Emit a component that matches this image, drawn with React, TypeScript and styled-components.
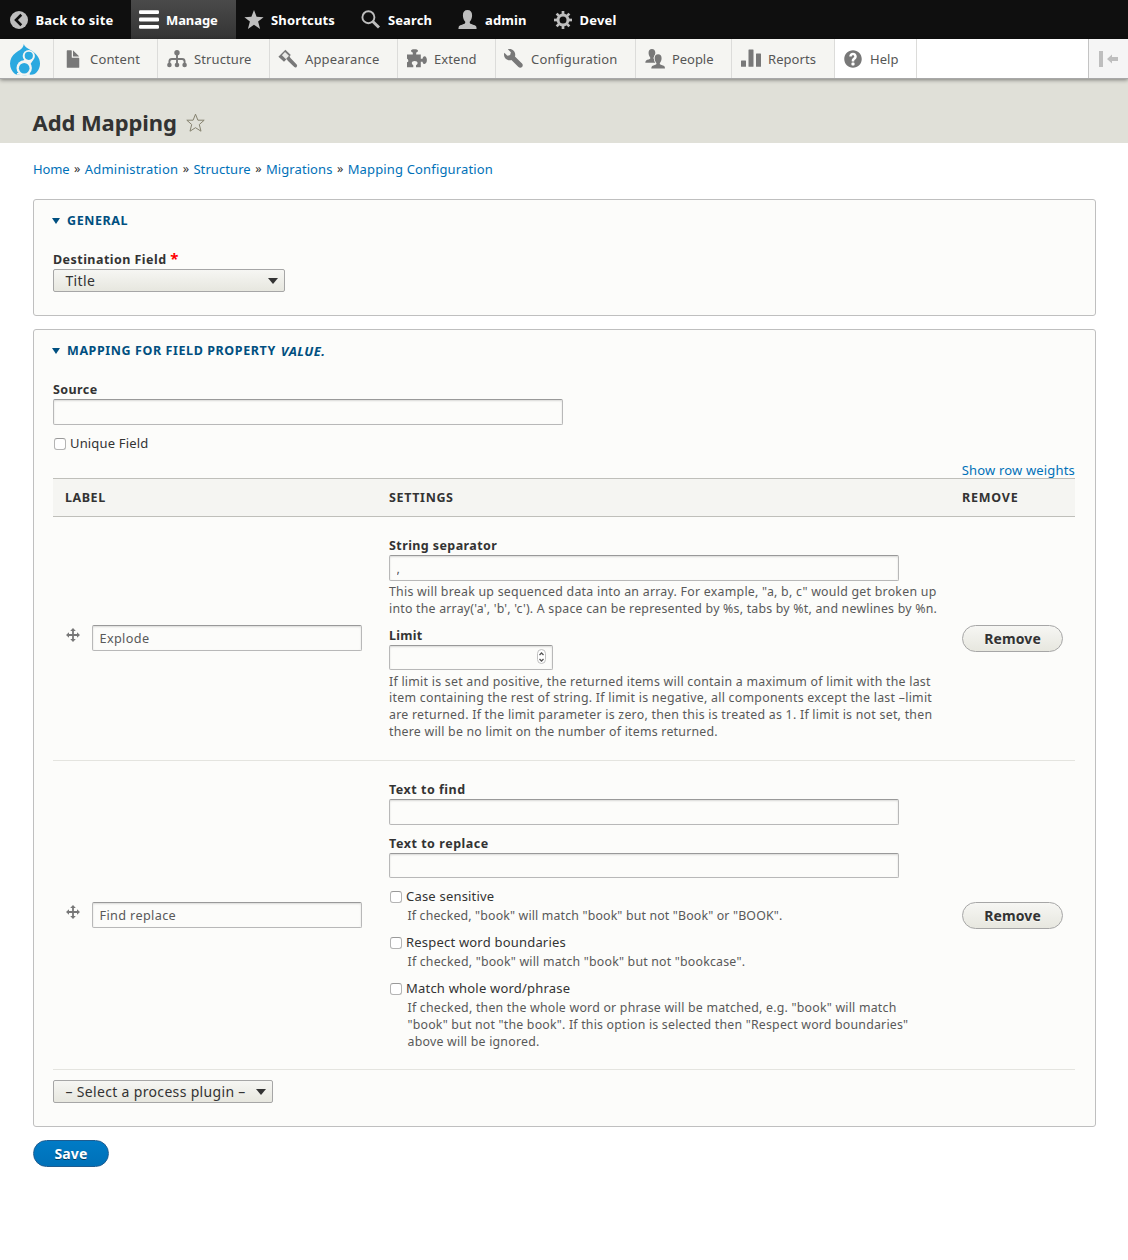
import React from "react";
import styled, { createGlobalStyle } from "styled-components";

const GlobalStyle = createGlobalStyle`
  *, *::before, *::after { box-sizing: border-box; }
  body {
    margin: 0;
    background: #fff;
    color: #333;
    font-family: "Noto Sans", "Open Sans", sans-serif;
    font-size: 13px;
  }
  input, button { font-family: inherit; }
`;

/* ---------- toolbar ---------- */

const ToolbarBar = styled.nav`
  display: flex;
  height: 39px;
  background: #0f0f0f;
`;

const BarTab = styled.a<{ $w: number; $icon: number; $text: number; $ls: number; $active?: boolean }>`
  display: flex;
  align-items: center;
  width: ${(p) => p.$w}px;
  height: 39px;
  padding: 1px 0 0 ${(p) => p.$icon}px;
  background: ${(p) => (p.$active ? "linear-gradient(#4a4a4a, #343434)" : "none")};
  color: #fff;
  font-weight: 700;
  letter-spacing: ${(p) => p.$ls}px;
  white-space: nowrap;
  svg {
    flex: none;
    width: 20px;
    height: 20px;
    margin-right: ${(p) => p.$text - p.$icon - 20}px;
    color: #bebebe;
  }
`;

const Tray = styled.nav`
  position: relative;
  display: flex;
  height: 40px;
  background: #fff;
  border-bottom: 1px solid #a8a8a8;
  box-shadow: 0 1px 4px rgba(0, 0, 0, 0.45);
`;

const TrayTab = styled.a<{ $w: number; $ls?: number; $plain?: boolean; $pad?: number }>`
  display: flex;
  align-items: center;
  width: ${(p) => p.$w}px;
  padding: 1px 0 0 ${(p) => p.$pad ?? 9}px;
  background: ${(p) => (p.$plain ? "#fff" : "#f5f5f2")};
  border-right: 1px solid #dcdcda;
  color: #565656;
  letter-spacing: ${(p) => p.$ls ?? 0}px;
  white-space: nowrap;
  svg {
    flex: none;
    width: 20px;
    height: 20px;
    margin-right: 7px;
    color: #787878;
  }
`;

const LogoTab = styled.a`
  width: 54px;
  padding: 5px 0 0 10px;
  background: #f5f5f2;
  border-right: 1px solid #dcdcda;
`;

const TrayToggle = styled.button`
  display: flex;
  align-items: center;
  width: 40px;
  margin-left: auto;
  padding: 0 0 0 9px;
  border: 0;
  border-left: 1px solid #c4c4c4;
  background: #f5f5f5;
  color: #bebebe;
`;

/* ---------- page header ---------- */

const PageHeader = styled.header`
  display: flex;
  gap: 9px;
  height: 64px;
  padding: 28px 0 0 32.5px;
  background: #e0e0d8;
`;

const PageTitle = styled.h1`
  margin: 0;
  font-size: 22px;
  line-height: 31px;
  font-weight: 700;
  letter-spacing: -0.08px;
`;

const TitleStar = styled.svg`
  margin-top: 5.5px;
`;

const Content = styled.main`
  padding: 0 32px 0 33px;
`;

const Breadcrumb = styled.nav`
  display: flex;
  height: 56px;
  padding-top: 16px;
  line-height: 20px;
  white-space: pre;
`;

const Link = styled.a<{ $ls?: number }>`
  color: #0071b8;
  letter-spacing: ${(p) => p.$ls ?? 0}px;
`;

const Separator = styled.span`
  width: 15.2px;
  text-align: center;
  font-size: 12.5px;
`;

/* ---------- form parts ---------- */

const Panel = styled.section<{ $h: number }>`
  height: ${(p) => p.$h}px;
  margin-bottom: 13px;
  padding: 11px 20px 0 19px;
  background: #fcfcfa;
  border: 1px solid #bfbfbf;
  border-radius: 3px;
`;

const Summary = styled.h2`
  display: flex;
  align-items: center;
  margin: 0 0 18px -1px;
  color: #004f80;
  font-size: 12.5px;
  line-height: 20px;
  font-weight: 700;
  letter-spacing: 0.59px;
  white-space: pre;
  svg { margin-right: 7px; }
  em { font-style: italic; font-size: 13px; letter-spacing: 0.45px; margin-left: 1px; }
`;

const Label = styled.label<{ $ls?: number }>`
  display: block;
  padding-top: 1px;
  font-size: 12.5px;
  line-height: 20px;
  height: 20px;
  font-weight: 700;
  letter-spacing: ${(p) => p.$ls ?? 0.41}px;
  white-space: pre;
`;

const Required = styled.span`
  color: #f00;
  font-size: 15px;
  line-height: 1px;
`;

const Select = styled.div<{ $w: number }>`
  display: flex;
  align-items: center;
  justify-content: space-between;
  width: ${(p) => p.$w}px;
  height: 23px;
  padding: 0 6px 0 11.5px;
  border: 1px solid #a6a6a6;
  border-radius: 2px;
  background: linear-gradient(#f6f6f3, #e7e7df);
  font-size: 14px;
  letter-spacing: 0.33px;
  white-space: nowrap;
`;

const TextInput = styled.input<{ $w: number; $h?: number }>`
  display: block;
  width: ${(p) => p.$w}px;
  height: ${(p) => p.$h ?? 26}px;
  padding: 0 6px 1px 6.5px;
  border: 1px solid #b8b8b8;
  border-top-color: #999;
  border-radius: 2px;
  outline: none;
  background: #fcfcfa;
  box-shadow: inset 0 1px 2px rgba(0, 0, 0, 0.14);
  color: #595959;
  font-size: 12.7px;
  letter-spacing: 0.35px;
`;

const NumberField = styled.div`
  display: flex;
  align-items: center;
  justify-content: flex-end;
  width: 164px;
  height: 25px;
  padding: 0 6px 1px 0;
  border: 1px solid #b8b8b8;
  border-top-color: #999;
  border-radius: 2px;
  background: #fcfcfa;
  box-shadow: inset 0 1px 2px rgba(0, 0, 0, 0.14);
`;

const Stepper = styled.span`
  display: flex;
  align-items: center;
  justify-content: center;
  width: 9px;
  height: 15px;
  border: 1px solid #c0c0c0;
  border-radius: 5px;
  background: #fff;
`;

const CheckRow = styled.label<{ $ls?: number }>`
  display: flex;
  align-items: center;
  height: 20px;
  padding-left: 1px;
  letter-spacing: ${(p) => p.$ls ?? 0.2}px;
`;

const CheckBox = styled.input.attrs({ type: "checkbox" })`
  appearance: none;
  width: 12px;
  height: 12px;
  margin: 2px 4px 0 0;
  border: 1px solid #b4b4b4;
  border-top-color: #999;
  border-radius: 3px;
  background: #fff;
`;

const Description = styled.p<{ $indent?: number; $top?: number }>`
  margin: 0;
  padding: ${(p) => p.$top ?? 2}px 0 0 ${(p) => p.$indent ?? 0}px;
  color: #595959;
  font-size: 12.35px;
  line-height: 16.8px;
`;

const Line = styled.span<{ $ls?: number }>`
  display: block;
  letter-spacing: ${(p) => p.$ls ?? 0.255}px;
  white-space: nowrap;
`;

/* ---------- plugin table ---------- */

const WeightToggle = styled.div`
  display: flex;
  justify-content: flex-end;
  height: 18px;
  line-height: 20px;
`;

const TableRow = styled.div<{ $h: number }>`
  display: grid;
  grid-template-columns: 324px 573px 1fr;
  align-items: center;
  height: ${(p) => p.$h}px;
  padding-left: 12px;
  border-bottom: 1px solid #e4e4df;
`;

const TableHead = styled(TableRow)`
  background: #f5f5f2;
  border-top: 1px solid #bfbfba;
  border-bottom-color: #bfbfba;
  font-size: 12.5px;
  font-weight: 700;
`;

const HeadCell = styled.span<{ $ls: number }>`
  letter-spacing: ${(p) => p.$ls}px;
`;

const LabelCell = styled.div<{ $lift?: number }>`
  display: flex;
  align-items: center;
  gap: 12px;
  padding: 0 0 ${(p) => p.$lift ?? 0}px 1px;
`;

const DragHandle = styled.svg`
  flex: none;
  margin-bottom: 6px;
`;

const SettingsCell = styled.div<{ $top: number }>`
  align-self: start;
  padding-top: ${(p) => p.$top}px;
`;

const Field = styled.div<{ $gap?: number }>`
  margin-bottom: ${(p) => p.$gap ?? 0}px;
`;

const Button = styled.button<{ $primary?: boolean }>`
  display: block;
  width: ${(p) => (p.$primary ? 76 : 101)}px;
  height: 27px;
  padding: 1px 0 0;
  border: 1px solid ${(p) => (p.$primary ? "#1e5c90" : "#a6a6a6")};
  border-radius: 14px;
  background: ${(p) => (p.$primary ? "linear-gradient(#007bc6, #0071b8)" : "linear-gradient(#f6f6f3, #e7e7df)")};
  color: ${(p) => (p.$primary ? "#fff" : "#333")};
  font-size: 14px;
  line-height: 24px;
  font-weight: 700;
  letter-spacing: 0.12px;
  text-shadow: ${(p) => (p.$primary ? "0 1px rgba(0, 0, 0, 0.5)" : "0 1px rgba(255, 255, 255, 0.6)")};
`;

const PluginPicker = styled.div`
  padding-top: 10px;
`;

/* ---------- icons ---------- */

const BackIcon = () => (
  <svg viewBox="0 0 20 20">
    <circle cx="10" cy="10" r="9" fill="currentColor" />
    <path d="M12.3 4.8 7 10l5.3 5.2" fill="none" stroke="#0f0f0f" strokeWidth="2.6" />
  </svg>
);
const MenuIcon = () => (
  <svg viewBox="0 0 20 20" fill="#fff">
    <rect x="0" y="0.2" width="20" height="3.8" rx="1.2" />
    <rect x="0" y="7.6" width="20" height="3.8" rx="1.2" />
    <rect x="0" y="15" width="20" height="3.8" rx="1.2" />
  </svg>
);
const StarIcon = () => (
  <svg viewBox="0 0 20 20" fill="currentColor">
    <path d="M10 0l2.6 6.8 7 .4-5.5 4.400 2 7.400-6.100-4.200L3.900 19l2-7.400L.4 7.200l7-.4z" />
  </svg>
);
const SearchIcon = () => (
  <svg viewBox="0 0 20 20" fill="none" stroke="currentColor">
    <circle cx="7.4" cy="7.2" r="6" strokeWidth="1.9" />
    <path d="M11.8 11.5l6.2 6" strokeWidth="3" />
  </svg>
);
const bust =
  "M9.5 0c3 0 4.6 2 4.6 5.2 0 2.600-.8 4.700-2 6.100-.6.7-.5 2 .4 2.500 1.700.9 5.500 1.200 5.900 3.200l.2 2H.4l.3-2c.5-2 4.200-2.300 5.800-3.200.9-.5 1-1.800.4-2.500-1.200-1.400-2-3.500-2-6.100C4.900 2 6.500 0 9.500 0z";
const UserIcon = () => (
  <svg viewBox="0 0 20 20" fill="currentColor"><path d={bust} /></svg>
);
const GearIcon = () => (
  <svg viewBox="0 0 20 20" fill="none" stroke="currentColor">
    <circle cx="10" cy="10" r="5" strokeWidth="3" />
    {[0, 45, 90, 135, 180, 225, 270, 315].map((a) => (
      <path key={a} d="M10 4.500V1" strokeWidth="2.7" transform={`rotate(${a} 10 10)`} />
    ))}
  </svg>
);
const FileIcon = () => (
  <svg viewBox="0 0 16 16" fill="currentColor">
    <path d="M12.502 7h-5c-.276 0-.502-.225-.502-.5v-5c0-.275-.225-.5-.5-.5h-3c-.275 0-.5.225-.5.5v13.029c0 .275.225.5.5.5h9.002c.275 0 .5-.225.5-.5v-7.029c0-.275-.225-.5-.5-.5zM8.502 6h4c.275 0 .34-.159.146-.354l-4.293-4.292c-.195-.195-.353-.129-.353.146v4c0 .275.225.5.5.5z" />
  </svg>
);
const StructureIcon = () => (
  <svg viewBox="0 0 20 20" fill="currentColor">
    <circle cx="10" cy="3.700" r="2.700" />
    <circle cx="2.400" cy="16" r="2.300" />
    <circle cx="10" cy="16" r="2.300" />
    <circle cx="17.600" cy="16" r="2.300" />
    <path d="M10 4v12M2.400 16v-3.500q0-2.500 2.500-2.500h10.200q2.500 0 2.500 2.500V16" fill="none" stroke="currentColor" strokeWidth="1.900" />
  </svg>
);
const BrushIcon = () => (
  <svg viewBox="0 0 20 20">
    <path d="M.4 7.800 7.400.7 12.800 6 6 12.800z" fill="currentColor" />
    <path d="M3.900 6.300 7 3l4.200 4L8 10.300z" fill="#e9e9e6" />
    <path d="M8.500 9.500l2.700-2.700 1.300 2.200 6.200 6.600q1 1.200-.1 2.300t-2.300.1l-6.500-6.300z" fill="currentColor" />
  </svg>
);
const PuzzleIcon = () => (
  <svg viewBox="0 0 20 20" fill="currentColor">
    <path d="M0 5.500h5.800V3.600C4.600 3.200 4 2.700 4 1.800 4 .7 5 .2 7.500.2s3.500.5 3.500 1.600c0 .9-.6 1.400-1.800 1.800v1.900h4.600v4.300h1.700c.3-1.700 1-2.600 2-2.600 1.500 0 2.400 1.800 2.400 3.900s-.9 3.900-2.400 3.900c-1 0-1.700-.9-2-2.300h-1.700v5.500H9v-1.900c1-.6 1.600-1.400 1.600-2.200 0-1.200-1.200-2-2.900-2s-2.900.8-2.900 2c0 .8.6 1.600 1.500 2.200v1.900H0v-5c1-.2 1.300-.6 1.300-1.300S1 9.900 0 9.700z" />
  </svg>
);
const WrenchIcon = () => (
  <svg viewBox="0 0 16 16" fill="currentColor">
    <path d="M14.416 11.586l-5.667-5.665c.15-.449.252-.921.252-1.421 0-2.485-2.016-4.500-4.502-4.500-.505 0-.981.102-1.434.255l2.431 2.431-.588 2.196-2.196.588-2.445-2.445c-.162.464-.268.956-.268 1.475 0 2.486 2.014 4.500 4.500 4.500.5 0 .972-.102 1.421-.251l5.667 5.665c.781.781 2.047.781 2.828 0s.781-2.047.001-2.828z" />
  </svg>
);
const PeopleIcon = () => (
  <svg viewBox="0 0 20 20" fill="currentColor">
    <path d={bust} transform="scale(.73)" />
    <path d={bust} transform="translate(6 5.200) scale(.75)" stroke="#f5f5f2" strokeWidth="2.400" paintOrder="stroke" />
  </svg>
);
const ChartIcon = () => (
  <svg viewBox="0 0 20 20" fill="currentColor">
    <rect x="0" y="11.500" width="5" height="6.300" rx=".5" />
    <rect x="7.500" y="0.500" width="5" height="17.300" rx=".5" />
    <rect x="15" y="4.500" width="5" height="13.300" rx=".5" />
  </svg>
);
const HelpIcon = () => (
  <svg viewBox="0 0 16 16" fill="currentColor">
    <path d="M8.002 1c-3.868 0-7.002 3.134-7.002 7s3.134 7 7.002 7c3.865 0 7-3.134 7-7s-3.135-7-7-7zm3 5c0 .551-.16 1.085-.477 1.586l-.158.22c-.07.093-.189.241-.361.393-.168.148-.35.299-.545.447l-.203.189-.141.129-.096.17-.021.235v.63h-2.001v-.704c.026-.396.078-.73.204-.999.125-.269.271-.498.439-.688l.225-.21-.01-.015.176-.14.137-.128c.186-.139.357-.277.516-.417l.148-.18c.098-.152.168-.323.168-.518 0-.552-.447-1-1.001-1s-.998.448-.998 1h-2.002c0-1.657 1.343-3 3-3s3 1.343 3 3zm-1.750 6.619c0 .344-.281.625-.625.625h-1.250c-.345 0-.626-.281-.626-.625v-1.238c0-.344.281-.626.626-.626h1.250c.344 0 .625.282.625.626v1.238z" />
  </svg>
);
const DrupalLogo = () => (
  <svg width="30" height="32" viewBox="0 0 30 32">
    <clipPath id="drop">
      <path d="M13.800 0c.6 2.800 3.400 4.200 6.200 5.800C26 9.200 30 13.500 30 19.500c0 4.500-2.300 8.600-5.500 10.500-3 1.500-17 1.500-19.500 0C2 27.800 0 24 0 19.600c0-4.500 2.300-8 5.500-10.600C9 6.300 13.400 4.600 13.800 0z" />
    </clipPath>
    <g clipPath="url(#drop)">
      <rect width="30" height="32" fill="#2ba9e0" />
      <circle cx="14.200" cy="24" r="7.700" fill="#f5f5f2" />
      <path d="M7 29h12l2 3H7z" fill="#f5f5f2" />
      <circle cx="18.800" cy="12" r="6.100" fill="#f5f5f2" />
      <path d="M12.500 17.500l3-2.500 7 2-2 3z" fill="#f5f5f2" />
      <circle cx="18.800" cy="11.800" r="4.100" fill="#2ba9e0" />
      <circle cx="14.200" cy="24.200" r="5.300" fill="#2ba9e0" />
    </g>
  </svg>
);
const ArrowDown = ({ size = 10, color = "#333" }: { size?: number; color?: string }) => (
  <svg width={size} height="6" viewBox="0 0 10 6" preserveAspectRatio="none">
    <path d="M0 0h10L5 6z" fill={color} />
  </svg>
);
const Drag = () => (
  <DragHandle width="14" height="14" viewBox="0 0 14 14">
    <path d="M7 2v10M2 7h10" stroke="#787878" strokeWidth="1.800" />
    <path d="M7 0l2.800 3H4.200zM7 14l2.800-3H4.200zM0 7l3-2.800v5.600zM14 7l-3-2.800v5.600z" fill="#787878" />
  </DragHandle>
);

/* ---------- data ---------- */

const barTabs = [
  { text: "Back to site", icon: <BackIcon />, w: 131, i: 9, t: 35.5, ls: 0.205 },
  { text: "Manage", icon: <MenuIcon />, w: 105, i: 8, t: 35, ls: -0.1, active: true },
  { text: "Shortcuts", icon: <StarIcon />, w: 117, i: 8, t: 35, ls: 0.165 },
  { text: "Search", icon: <SearchIcon />, w: 96, i: 8, t: 35, ls: 0.1 },
  { text: "admin", icon: <UserIcon />, w: 95, i: 9, t: 36, ls: 0.1 },
  { text: "Devel", icon: <GearIcon />, w: 100, i: 9, t: 35.5, ls: 0.185 },
];

const trayTabs = [
  { text: "Content", icon: <FileIcon />, w: 104, ls: 0.16 },
  { text: "Structure", icon: <StructureIcon />, w: 112, ls: 0.1 },
  { text: "Appearance", icon: <BrushIcon />, w: 128, ls: 0.157, pad: 8 },
  { text: "Extend", icon: <PuzzleIcon />, w: 98, ls: 0.09 },
  { text: "Configuration", icon: <WrenchIcon />, w: 140, ls: 0.168, pad: 8 },
  { text: "People", icon: <PeopleIcon />, w: 96, ls: -0.05 },
  { text: "Reports", icon: <ChartIcon />, w: 103, ls: 0.06 },
  { text: "Help", icon: <HelpIcon />, w: 82, ls: 0.05, plain: true, pad: 8 },
];

const crumbs = [
  { text: "Home", ls: -0.12 },
  { text: "Administration", ls: 0.217 },
  { text: "Structure", ls: 0.08 },
  { text: "Migrations", ls: 0.078 },
  { text: "Mapping Configuration", ls: 0.15 },
];

export default function App() {
  return (
    <>
      <GlobalStyle />
      <ToolbarBar>
        {barTabs.map((t) => (
          <BarTab key={t.text} $w={t.w} $icon={t.i} $text={t.t} $ls={t.ls} $active={t.active}>
            {t.icon}
            {t.text}
          </BarTab>
        ))}
      </ToolbarBar>
      <Tray>
        <LogoTab><DrupalLogo /></LogoTab>
        {trayTabs.map((t) => (
          <TrayTab key={t.text} $w={t.w} $ls={t.ls} $plain={t.plain} $pad={t.pad}>
            {t.icon}
            {t.text}
          </TrayTab>
        ))}
        <TrayToggle>
          <svg width="20" height="16" viewBox="0 0 20 16" fill="currentColor">
            <rect x="1" y="0" width="4" height="16" />
            <path d="M9 8l5-4.500V6h6v4h-6v2.500z" />
          </svg>
        </TrayToggle>
      </Tray>
      <PageHeader>
        <PageTitle>Add Mapping</PageTitle>
        <TitleStar width="19" height="20" viewBox="0 0 19 20">
          <path d="M9.500 1.200l2.400 6h6.300l-4.900 4.300 1.700 6.700-5.500-3.500-5.500 3.500 1.700-6.700L.8 7.200h6.300z" fill="none" stroke="#85826f" strokeWidth="1" />
        </TitleStar>
      </PageHeader>
      <Content>
        <Breadcrumb>
          {crumbs.map((c, i) => (
            <React.Fragment key={c.text}>
              {i > 0 && <Separator>»</Separator>}
              <Link $ls={c.ls}>{c.text}</Link>
            </React.Fragment>
          ))}
        </Breadcrumb>

        <Panel $h={117}>
          <Summary><ArrowDown size={8} color="#004f80" />GENERAL</Summary>
          <Label $ls={0.46}>Destination Field <Required>*</Required></Label>
          <Select $w={232}>Title<ArrowDown /></Select>
        </Panel>

        <Panel $h={798}>
          <Summary><ArrowDown size={8} color="#004f80" />MAPPING FOR FIELD PROPERTY <em>VALUE.</em></Summary>
          <Field $gap={8}>
            <Label>Source</Label>
            <TextInput $w={510} />
          </Field>
          <Field $gap={7}>
            <CheckRow $ls={0.16}><CheckBox />Unique Field</CheckRow>
          </Field>
          <WeightToggle><Link $ls={0.17}>Show row weights</Link></WeightToggle>

          <TableHead $h={39}>
            <HeadCell $ls={0.55}>LABEL</HeadCell>
            <HeadCell $ls={0.64}>SETTINGS</HeadCell>
            <HeadCell $ls={0.75}>REMOVE</HeadCell>
          </TableHead>

          <TableRow $h={244}>
            <LabelCell $lift={1}><Drag /><TextInput $w={270} defaultValue="Explode" /></LabelCell>
            <SettingsCell $top={18}>
              <Field $gap={7}>
                <Label>String separator</Label>
                <TextInput $w={510} defaultValue="," />
                <Description $top={3}>
                  <Line>This will break up sequenced data into an array. For example, "a, b, c" would get broken up</Line>
                  <Line $ls={0.215}>into the array('a', 'b', 'c'). A space can be represented by %s, tabs by %t, and newlines by %n.</Line>
                </Description>
              </Field>
              <Label $ls={0.285}>Limit</Label>
              <NumberField>
                <Stepper>
                  <svg width="5" height="10" viewBox="0 0 5 10" fill="none" stroke="#555" strokeWidth="1.300">
                    <path d="M.5 3L2.500 1l2 2M.5 7l2 2 2-2" />
                  </svg>
                </Stepper>
              </NumberField>
              <Description $top={4}>
                <Line>If limit is set and positive, the returned items will contain a maximum of limit with the last</Line>
                <Line $ls={0.27}>item containing the rest of string. If limit is negative, all components except the last –limit</Line>
                <Line>are returned. If the limit parameter is zero, then this is treated as 1. If limit is not set, then</Line>
                <Line $ls={0.23}>there will be no limit on the number of items returned.</Line>
              </Description>
            </SettingsCell>
            <Button>Remove</Button>
          </TableRow>

          <TableRow $h={309}>
            <LabelCell><Drag /><TextInput $w={270} defaultValue="Find replace" /></LabelCell>
            <SettingsCell $top={18}>
              <Field $gap={8}>
                <Label $ls={0.5}>Text to find</Label>
                <TextInput $w={510} />
              </Field>
              <Field $gap={8}>
                <Label $ls={0.54}>Text to replace</Label>
                <TextInput $w={510} $h={25} />
              </Field>
              <Field $gap={7}>
                <CheckRow><CheckBox />Case sensitive</CheckRow>
                <Description $indent={18.5}>
                  <Line $ls={0.155}>If checked, "book" will match "book" but not "Book" or "BOOK".</Line>
                </Description>
              </Field>
              <Field $gap={7}>
                <CheckRow><CheckBox />Respect word boundaries</CheckRow>
                <Description $indent={18.5}>
                  <Line $ls={0.2}>If checked, "book" will match "book" but not "bookcase".</Line>
                </Description>
              </Field>
              <CheckRow><CheckBox />Match whole word/phrase</CheckRow>
              <Description $indent={18.5} $top={2.400}>
                <Line $ls={0.22}>If checked, then the whole word or phrase will be matched, e.g. "book" will match</Line>
                <Line $ls={0.2}>"book" but not "the book". If this option is selected then "Respect word boundaries"</Line>
                <Line $ls={0.23}>above will be ignored.</Line>
              </Description>
            </SettingsCell>
            <Button>Remove</Button>
          </TableRow>

          <PluginPicker>
            <Select $w={220}>– Select a process plugin –<ArrowDown /></Select>
          </PluginPicker>
        </Panel>
        <Button $primary>Save</Button>
      </Content>
    </>
  );
}
